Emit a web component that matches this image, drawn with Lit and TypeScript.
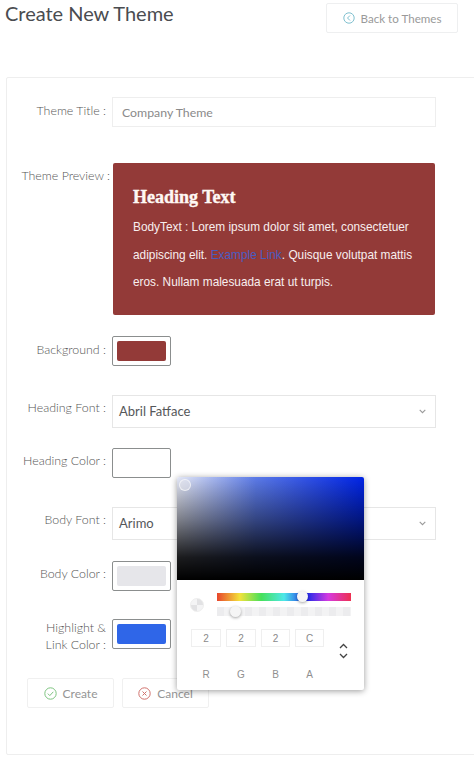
import { LitElement, html, css } from "lit";
import { customElement } from "lit/decorators.js";

@customElement("app-root")
export class AppRoot extends LitElement {
  static styles = css`
    :host { display: block; position: relative; width: 474px; height: 757px; overflow: hidden; background: #fff;
      font-family: Lato, "Liberation Sans", sans-serif; color: #777; }
    .head { display: flex; justify-content: space-between; align-items: flex-start; height: 77px; padding: 3px 0 0 5px; box-sizing: border-box; }
    h1 { margin: 0; font-size: 20px; line-height: 21px; font-weight: 400; color: #4a4c50; letter-spacing: -0.02px; }
    .back { margin-right: 16px; width: 132px; height: 30px; box-sizing: border-box; border: 1px solid #eeeff0; display: flex; align-items: center; justify-content: center; gap: 6px; font-size: 11.6px; color: #9a9a9a; border-radius: 2px; }
    .card { margin-left: 6px; width: 480px; height: 678px; box-sizing: border-box; border: 1px solid #eeeeee; padding-top: 19px; border-radius: 2px; }
    .row { display: grid; grid-template-columns: 99px 324px; column-gap: 6px; }
    .lab { text-align: right; font-size: 12.4px; line-height: 17px; color: #555; font-weight: 300; }
    .wide { margin-right: -4px; white-space: nowrap; }
    .input { height: 30px; box-sizing: border-box; border: 1px solid #eeeeee; padding: 1px 0 0 9px; display: flex; align-items: center; font-size: 12.3px; color: #8a8a8a; }
    .preview { height: 152px; box-sizing: border-box; background: #933a38; border-radius: 2px; padding: 22px 20px; color: #fff; font-family: "Liberation Sans", sans-serif; font-size: 11.85px; margin-left: 1px; width: 322px; }
    .preview h2 { margin: 0 0 6px; font: 700 18px/23px "Liberation Serif", serif; -webkit-text-stroke: 0.4px #fff8f4; color: #fff8f4; padding-top: 1px; height: 22px; }
    .preview p { margin: 0; line-height: 27.7px; color: #f8eeee; white-space: nowrap; }
    .preview a { color: #4a5cc0; }
    .swatch { width: 59px; height: 30px; box-sizing: border-box; border: 1px solid #8b8e8e; border-radius: 2px; padding: 4px; }
    .swatch div { height: 100%; border-radius: 2px; }
    .select { height: 33px; box-sizing: border-box; border: 1px solid #e6e6e6; padding: 0 9px 2px 6px; display: flex; align-items: center; justify-content: space-between; font-size: 13px; color: #55575a; }
    .btns { display: flex; gap: 8px; margin: 25px 0 0 20px; }
    .btn { width: 87px; height: 30px; box-sizing: border-box; border: 1px solid #f0f0f0; display: flex; align-items: center; justify-content: center; gap: 6px; font-size: 12px; color: #959595; border-radius: 2px; }
    .pop { position: absolute; left: 177px; top: 477px; width: 187px; height: 213px; background: #fff; box-shadow: 0 1px 6px rgba(0,0,0,.4); border-radius: 2px; font-family: "Liberation Sans", sans-serif; }
    .sat { height: 103px; position: relative; border-radius: 2px 2px 0 0;
      background: linear-gradient(to top, #000, rgba(0,0,0,.88) 22%, rgba(0,0,0,.45) 58%, rgba(0,0,0,0)), linear-gradient(to right, #e4e8f6, #5c7be8 42%, #0024e6); }
    .dot { position: absolute; left: 2px; top: 2px; width: 10px; height: 10px; border-radius: 50%; border: 1px solid rgba(255,255,255,.6); background: rgba(230,230,235,.5); }
    .ctl { display: flex; padding: 13px 13px 0; gap: 13px; align-items: center; }
    .ball { width: 14px; height: 14px; border-radius: 50%; background: conic-gradient(#e2e2e4 0 25%, #f4f4f5 25% 50%, #e2e2e4 50% 75%, #f4f4f5 75%); border: 1px solid #eee; flex: none; box-sizing: border-box; }
    .bars { display: flex; flex-direction: column; gap: 6px; width: 134px; }
    .hue { height: 8px; position: relative; background: linear-gradient(to right, #e8452c, #f3e23a 17%, #46e05a 33%, #4de8e8 50%, #1d2bea 67%, #d53ae0 83%, #ee3050); }
    .alpha { height: 9px; position: relative; background: repeating-linear-gradient(90deg, #ececee 0 7px, #f3f3f4 7px 14px); }
    .knob { position: absolute; width: 11px; height: 11px; border-radius: 50%; background: #f5f5f5; box-shadow: 0 1px 3px rgba(0,0,0,.35); top: -2px; }
    .rgba { display: grid; grid-template-columns: 30px 30px 29px 29px; column-gap: 5px; padding: 13px 0 0 14px; position: relative; }
    .rgba span { height: 16px; border: 1px solid #efefef; display: flex; align-items: center; justify-content: center; font-size: 10px; color: #8a8a8a; }
    .keys { display: grid; grid-template-columns: 30px 30px 29px 29px; column-gap: 5px; padding: 22px 0 0 14px; font-size: 10px; color: #8f8f8f; text-align: center; line-height: 12px; }
    .arrows { position: absolute; left: 162px; top: 27px; }
  `;

  swatch(color: string) {
    return html`<div class="swatch"><div style="background:${color}"></div></div>`;
  }
  chevron() {
    return html`<svg width="7" height="5" viewBox="0 0 7 5" style="position:relative;top:1px"><path d="M.7.8l2.8 2.8L6.3.8" fill="none" stroke="#9a9a9a" stroke-width="1.1"/></svg>`;
  }

  render() {
    return html`
      <div class="head">
        <h1>Create New Theme</h1>
        <div class="back">
          <svg width="12" height="12" viewBox="0 0 12 12"><circle cx="6" cy="6" r="5.2" fill="none" stroke="#7fc0cf"/><path d="M7 3.5L4.5 6 7 8.5" fill="none" stroke="#7fc0cf"/></svg>
          Back to Themes
        </div>
      </div>
      <div class="card">
        <div class="row"><div class="lab" style="padding-top:5px">Theme Title :</div><div class="input">Company Theme</div></div>
        <div class="row" style="margin-top:36px"><div class="lab wide" style="padding-top:4px">Theme Preview :</div>
          <div class="preview"><h2>Heading Text</h2><p>BodyText : Lorem ipsum dolor sit amet, consectetuer<br>adipiscing elit. <a>Example Link</a>. Quisque volutpat mattis<br>eros. Nullam malesuada erat ut turpis.</p></div></div>
        <div class="row" style="margin-top:21px"><div class="lab" style="padding-top:5px">Background :</div>${this.swatch("#933a38")}</div>
        <div class="row" style="margin-top:29px"><div class="lab" style="padding-top:4px">Heading Font :</div><div class="select">Abril Fatface ${this.chevron()}</div></div>
        <div class="row" style="margin-top:20px"><div class="lab" style="padding-top:4px">Heading Color :</div>${this.swatch("#ffffff")}</div>
        <div class="row" style="margin-top:29px"><div class="lab" style="padding-top:4px">Body Font :</div><div class="select">Arimo ${this.chevron()}</div></div>
        <div class="row" style="margin-top:21px"><div class="lab" style="padding-top:4px">Body Color :</div>${this.swatch("#e6e6ea")}</div>
        <div class="row" style="margin-top:28px"><div class="lab">Highlight &amp;<br>Link Color :</div>${this.swatch("#2f66e8")}</div>
        <div class="btns">
          <div class="btn"><svg width="13" height="13" viewBox="0 0 13 13"><circle cx="6.5" cy="6.5" r="5.7" fill="none" stroke="#7cc47f"/><path d="M3.8 6.6l2 2 3.5-3.8" fill="none" stroke="#7cc47f"/></svg>Create</div>
          <div class="btn"><svg width="13" height="13" viewBox="0 0 13 13"><circle cx="6.5" cy="6.5" r="5.7" fill="none" stroke="#d0716c"/><path d="M4.5 4.5l4 4M8.5 4.5l-4 4" fill="none" stroke="#d0716c"/></svg>Cancel</div>
        </div>
      </div>
      <div class="pop">
        <div class="sat"><div class="dot"></div></div>
        <div class="ctl">
          <div class="ball"></div>
          <div class="bars">
            <div class="hue"><div class="knob" style="left:80px"></div></div>
            <div class="alpha"><div class="knob" style="left:13px;top:-1px"></div></div>
          </div>
        </div>
        <div class="rgba"><span>2</span><span>2</span><span>2</span><span>C</span>
          <svg class="arrows" width="9" height="16" viewBox="0 0 9 16"><path d="M1 5l3.5-3.5L8 5M1 11l3.5 3.5L8 11" fill="none" stroke="#444" stroke-width="1.3"/></svg>
        </div>
        <div class="keys"><div>R</div><div>G</div><div>B</div><div>A</div></div>
      </div>
    `;
  }
}
